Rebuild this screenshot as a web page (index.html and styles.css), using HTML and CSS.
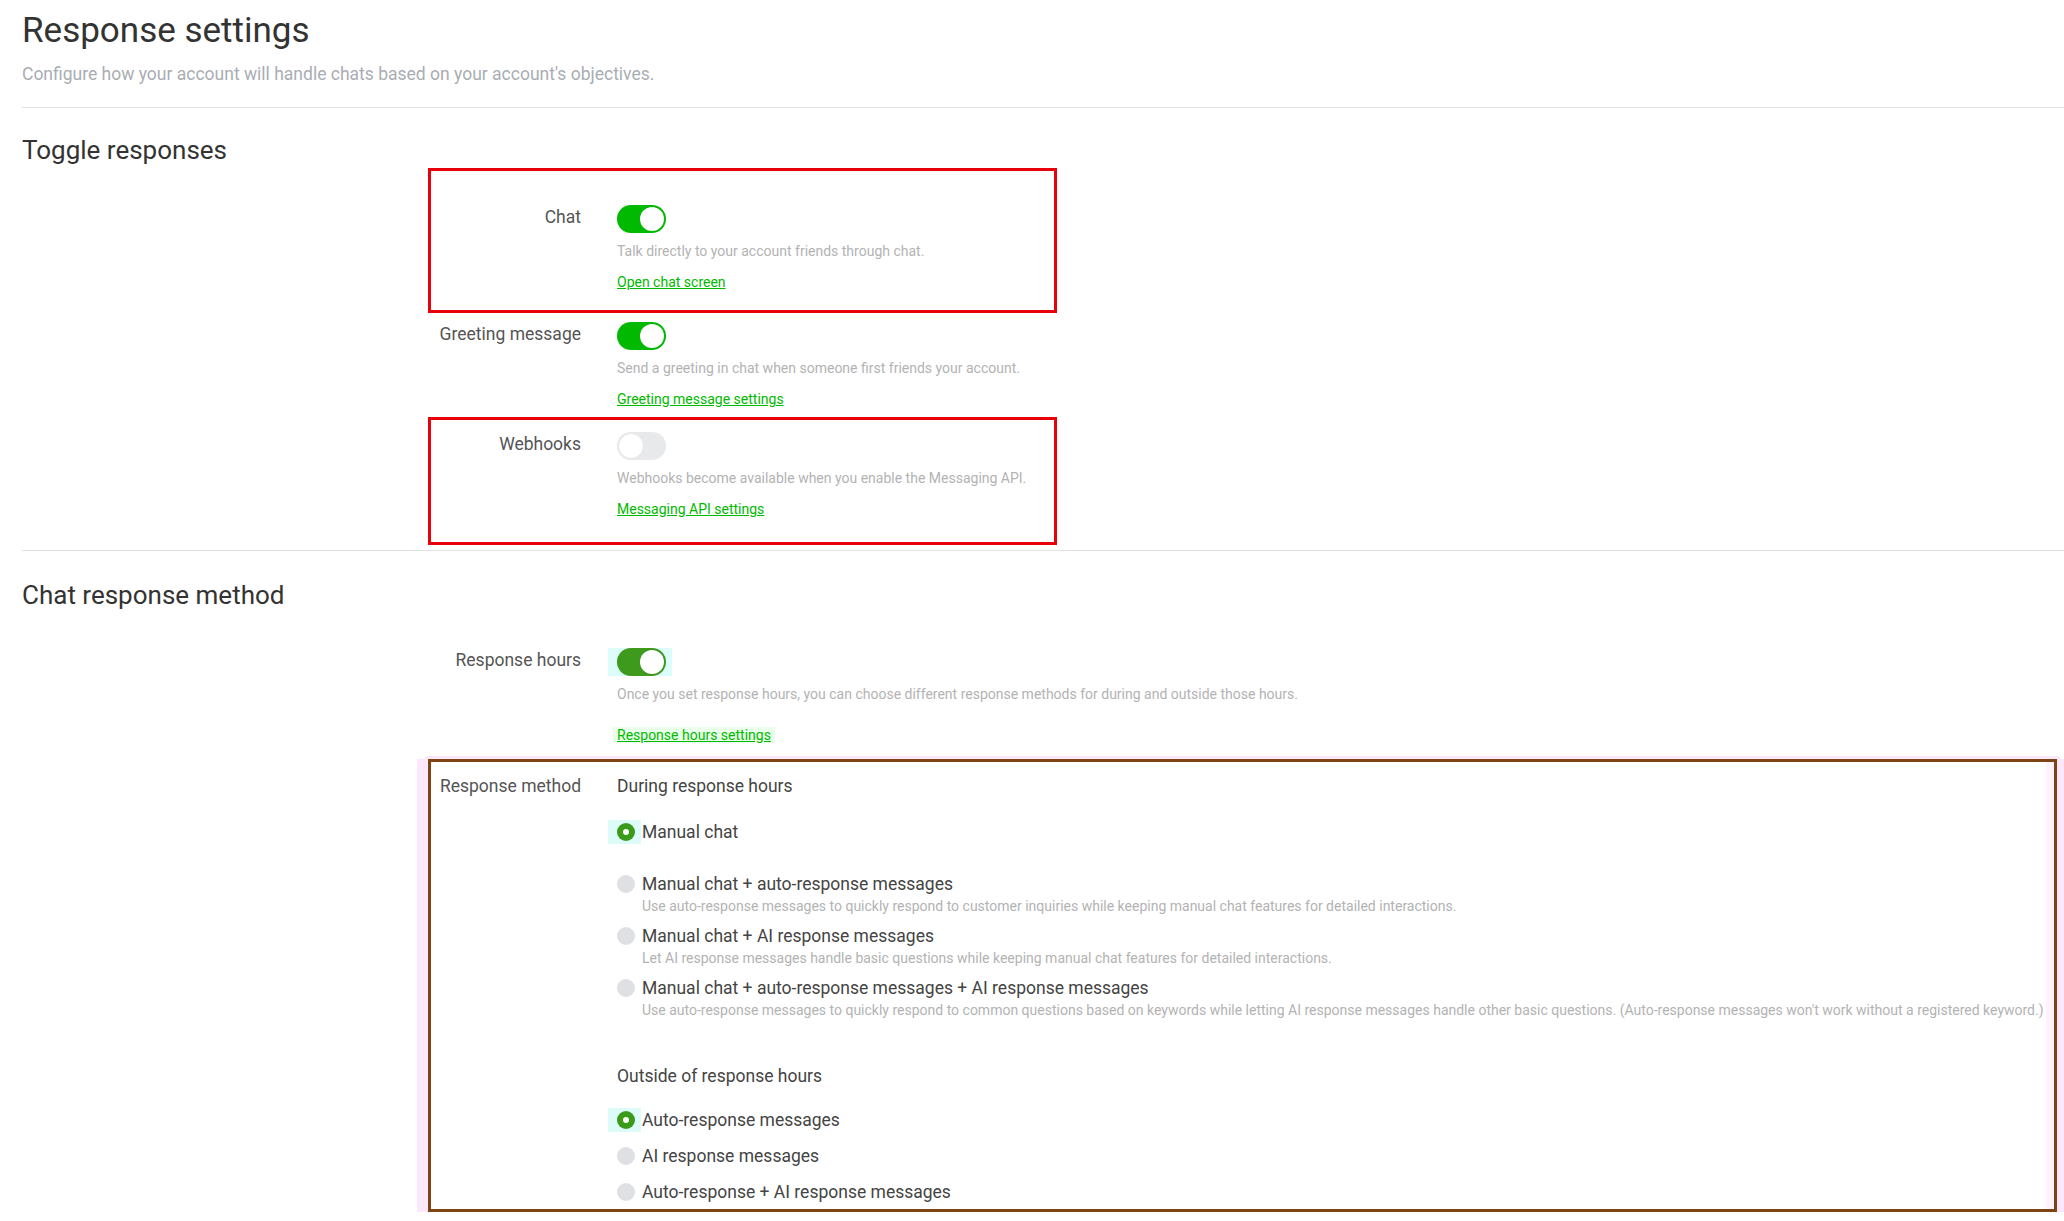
FILE: index.html
```html
<!DOCTYPE html>
<html>
    <head>
        <title>Response settings</title>
        <link rel="stylesheet" href="styles.css">
    </head>
    <body>
        <h1 class="page-title">Response settings</h1>
        <p class="page-lead">Configure how your account will handle chats based on your account's objectives.</p>
        <hr class="divider">

        <h2 class="section-title">Toggle responses</h2>
        <div class="rows">
            <div class="row narrow marked row-chat">
                <div class="row-label">Chat</div>
                <div class="row-body">
                    <span class="toggle on"></span>
                    <div class="desc">Talk directly to your account friends through chat.</div>
                    <a class="link" href="#">Open chat screen</a>
                </div>
            </div>
            <div class="row row-greeting">
                <div class="row-label">Greeting message</div>
                <div class="row-body">
                    <span class="toggle on"></span>
                    <div class="desc">Send a greeting in chat when someone first friends your account.</div>
                    <a class="link" href="#">Greeting message settings</a>
                </div>
            </div>
            <div class="row narrow marked row-webhooks">
                <div class="row-label">Webhooks</div>
                <div class="row-body">
                    <span class="toggle"></span>
                    <div class="desc">Webhooks become available when you enable the Messaging API.</div>
                    <a class="link" href="#">Messaging API settings</a>
                </div>
            </div>
        </div>
        <hr class="divider divider-second">

        <h2 class="section-title section-method">Chat response method</h2>
        <div class="rows">
            <div class="row row-hours">
                <div class="row-label">Response hours</div>
                <div class="row-body">
                    <span class="hl-cyan"><span class="toggle on dark"></span></span>
                    <div class="desc desc-hours">Once you set response hours, you can choose different response methods for during and outside those hours.</div>
                    <a class="link link-hours" href="#"><span class="hl-green">Response hours settings</span></a>
                </div>
            </div>
            <div class="row wide row-method">
                <div class="row-label">Response method</div>
                <div class="row-body">
                    <div class="group-title">During response hours</div>
                    <div class="options options-during">
                        <div class="option option-first">
                            <div class="option-line">
                                <span class="pick"><span class="radio on"></span></span>
                                <span>Manual chat</span>
                            </div>
                        </div>
                        <div class="option">
                            <div class="option-line">
                                <span class="radio"></span>
                                <span>Manual chat + auto-response messages</span>
                            </div>
                            <div class="option-desc">Use auto-response messages to quickly respond to customer inquiries while keeping manual chat features for detailed interactions.</div>
                        </div>
                        <div class="option">
                            <div class="option-line">
                                <span class="radio"></span>
                                <span>Manual chat + AI response messages</span>
                            </div>
                            <div class="option-desc">Let AI response messages handle basic questions while keeping manual chat features for detailed interactions.</div>
                        </div>
                        <div class="option">
                            <div class="option-line">
                                <span class="radio"></span>
                                <span>Manual chat + auto-response messages + AI response messages</span>
                            </div>
                            <div class="option-desc">Use auto-response messages to quickly respond to common questions based on keywords while letting AI response messages handle other basic questions. (Auto-response messages won't work without a registered keyword.)</div>
                        </div>
                    </div>

                    <div class="group-title group-outside">Outside of response hours</div>
                    <div class="options options-outside">
                        <div class="option">
                            <div class="option-line">
                                <span class="pick"><span class="radio on"></span></span>
                                <span>Auto-response messages</span>
                            </div>
                        </div>
                        <div class="option">
                            <div class="option-line">
                                <span class="radio"></span>
                                <span>AI response messages</span>
                            </div>
                        </div>
                        <div class="option">
                            <div class="option-line">
                                <span class="radio"></span>
                                <span>Auto-response + AI response messages</span>
                            </div>
                        </div>
                    </div>
                </div>
            </div>
        </div>
    </body>
</html>
```

FILE: styles.css
```css
body {
    margin: 0;
    padding: 11px 0 0 22px;
    font-family: Roboto, "Noto Sans", sans-serif;
    color: #333;
    background: #fff;
}
.page-title {
    margin: 0;
    font-size: 35px;
    line-height: 40px;
    font-weight: 400;
    color: #333;
}
.page-lead {
    margin: 11px 0 0;
    font-size: 17.5px;
    line-height: 24px;
    color: #a9adb3;
}
.divider {
    margin: 21px 0 0;
    border: 0;
    border-top: 1px solid #e1e1e1;
    height: 0;
}
.divider-second {
    margin-top: 5px;
}
.section-title {
    margin: 26px 0 0;
    font-size: 26px;
    line-height: 32px;
    font-weight: 400;
    color: #333;
}
.section-method {
    margin-top: 28px;
}
.rows {
    margin-left: 406px;
}
.row {
    display: flex;
    gap: 36px;
    border: 3px solid transparent;
    box-sizing: border-box;
}
.row.narrow {
    width: 629px;
}
.row.marked {
    border-color: #e8000b;
}
.row-label {
    flex: none;
    width: 150px;
    text-align: right;
    font-size: 17.5px;
    line-height: 24px;
    color: #555;
}
.row-body {
    flex: 1;
    min-width: 0;
}
.row-chat {
    margin-top: 2px;
    padding: 34px 0 18px;
}
.row-greeting {
    margin-top: 6px;
}
.row-webhooks {
    margin-top: 5px;
    padding: 12px 0 23px;
}
.row-hours {
    margin-top: 34px;
}
.row-method {
    width: 1629px;
    margin-top: 11px;
    padding: 12px 0 5px;
    border-color: #7e4414;
    box-shadow: -11px 0 0 0 #fde8fb, 7px 0 0 0 #fde8fb, 0 9px 0 0 #fde8fb, 0 0 0 3px #fde8fb, inset -8px 0 0 0 #fff1fe;
}

/* toggles */
.toggle {
    display: block;
    position: relative;
    width: 49px;
    height: 28px;
    border-radius: 14px;
    background: #e8e9eb;
}
.toggle::after {
    content: "";
    position: absolute;
    top: 2px;
    left: 2px;
    width: 24px;
    height: 24px;
    border-radius: 50%;
    background: #fff;
    box-shadow: 0 0 1px rgba(0, 0, 0, 0.08);
}
.toggle.on {
    background: #00b900;
}
.toggle.on::after {
    left: auto;
    right: 2px;
}
.toggle.dark {
    background: #3d9a1c;
}
.hl-cyan {
    display: block;
    width: 55px;
    margin-left: -9px;
    padding-left: 9px;
    background: #ddfdfd;
}
.hl-green {
    background: #eaffea;
    padding: 0 4px;
    margin: 0 -4px;
}

.desc {
    margin-top: 8px;
    font-size: 14px;
    line-height: 20px;
    color: #b3b3b3;
}
.link {
    display: inline-block;
    margin-top: 11px;
    font-size: 14px;
    line-height: 20px;
    color: #00b900;
    text-decoration: underline;
}
.desc-hours {
    margin-top: 8px;
}
.link-hours {
    margin-top: 21px;
}

/* response method */
.group-title {
    font-size: 17.5px;
    line-height: 24px;
    color: #444;
}
.group-outside {
    margin-top: 44px;
}
.options {
    display: flex;
    flex-direction: column;
}
.options-during {
    margin-top: 22px;
    gap: 8px;
}
.options-outside {
    margin-top: 20px;
    gap: 12px;
}
.option-first {
    margin-bottom: 20px;
}
.option-line {
    display: flex;
    align-items: center;
    gap: 7px;
    font-size: 17.5px;
    line-height: 24px;
    color: #444;
}
.radio {
    flex: none;
    position: relative;
    width: 18px;
    height: 18px;
    border-radius: 50%;
    background: #dfe0e4;
}
.radio.on {
    background: #3b9a1a;
}
.radio.on::after {
    content: "";
    position: absolute;
    top: 6px;
    left: 6px;
    width: 6px;
    height: 6px;
    border-radius: 50%;
    background: #fff;
}
.pick {
    display: flex;
    padding: 3px 6px 3px 9px;
    margin: -3px -6px -3px -9px;
    background: #dcfbf9;
}
.option-desc {
    padding-left: 25px;
    font-size: 14px;
    line-height: 20px;
    color: #b3b3b3;
}
```
